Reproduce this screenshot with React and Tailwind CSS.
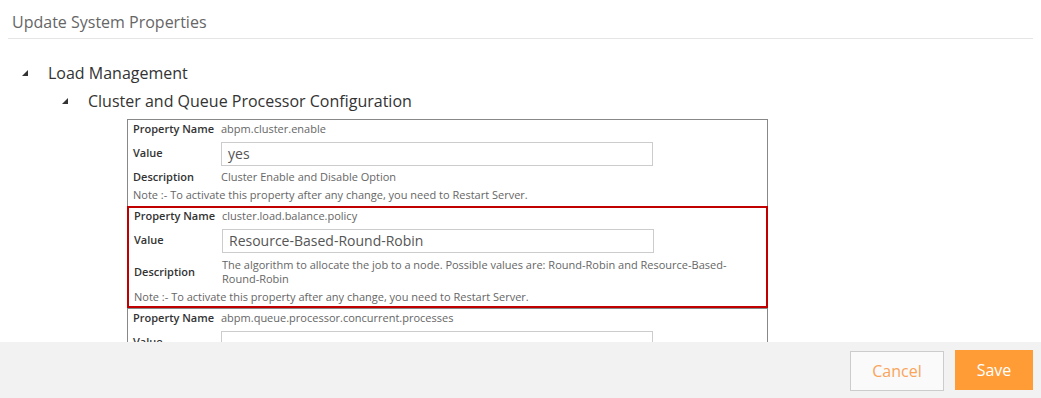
import React from 'react'

const font = { fontFamily: '"Open Sans", Lato, "Liberation Sans", sans-serif' }

function Tri() {
  return (
    <svg width="6" height="6" viewBox="0 0 6 6" className="shrink-0">
      <path d="M6 0 L6 6 L0 6 Z" fill="#333" />
    </svg>
  )
}

function Row({ label, children, className = '' }) {
  return (
    <div className={['flex items-center', className].join(' ')}>
      <div className="w-[93px] shrink-0 pl-[5px] text-[11px] font-semibold text-[#333]">{label}</div>
      <div className="flex-1 pr-[24px] text-[11px] text-[#666]">{children}</div>
    </div>
  )
}

function Property({ name, value, description, selected, className = '' }) {
  const wide = description.length > 60
  return (
    <div
      className={[
        selected ? '-mx-px border-2 border-[#c00000]' : '',
        className,
      ].join(' ')}
    >
      <Row label="Property Name" className={selected ? 'h-[17px]' : 'h-[18px]'}>
        {name}
      </Row>
      <Row label="Value" className="h-[31px]">
        <div className="flex h-[24px] w-[432px] items-center border border-[#ccc] px-1.5 text-[14px] text-[#555]">
          {value}
        </div>
      </Row>
      <Row label="Description" className={wide ? 'h-[32px]' : 'h-[16px]'}>
        <div className="leading-[14px]">{description}</div>
      </Row>
      <div
        className={[
          'flex items-center pl-[5px] text-[11px] text-[#666]',
          selected ? 'h-[18px]' : 'h-[21px]',
        ].join(' ')}
      >
        Note :- To activate this property after any change, you need to Restart Server.
      </div>
    </div>
  )
}

export default function App() {
  return (
    <div className="flex h-[398px] w-[1041px] flex-col bg-white" style={font}>
      <div className="min-h-0 flex-1 overflow-hidden">
        <div className="mx-[8px] border-b border-[#e5e5e5] pb-[6px] pl-[4px] pt-[12px] text-[16px] leading-[20px] text-[#666]">
          Update System Properties
        </div>

        <div className="mt-[24px] flex items-center gap-[20px] pl-[22px] text-[16px] leading-[20px] text-[#333]">
          <Tri />
          <span>Load Management</span>
        </div>
        <div className="mt-[8px] flex items-center gap-[20px] pl-[62px] text-[16px] leading-[20px] text-[#333]">
          <Tri />
          <span>Cluster and Queue Processor Configuration</span>
        </div>

        <div className="ml-[127px] mt-[8px] w-[641px] border border-[#888]">
          <Property
            name="abpm.cluster.enable"
            value="yes"
            description="Cluster Enable and Disable Option"
          />
          <Property
            selected
            name="cluster.load.balance.policy"
            value="Resource-Based-Round-Robin"
            description="The algorithm to allocate the job to a node. Possible values are: Round-Robin and Resource-Based-Round-Robin"
          />
          <Property
            className="border-t border-[#888]"
            name="abpm.queue.processor.concurrent.processes"
            value=""
            description="Number of concurrent processes"
          />
        </div>
      </div>

      <div className="flex h-[56px] shrink-0 items-center justify-end gap-[11px] bg-[#f2f2f2] pr-[8px]">
        <button
          type="button"
          className="mt-[1px] h-[40px] w-[94px] border border-[#ccc] bg-[#fafafa] text-[16px] text-[#f9a45a]"
        >
          Cancel
        </button>
        <button
          type="button"
          className="h-[40px] w-[78px] bg-[#ff9c36] text-[16px] text-white"
        >
          Save
        </button>
      </div>
    </div>
  )
}
